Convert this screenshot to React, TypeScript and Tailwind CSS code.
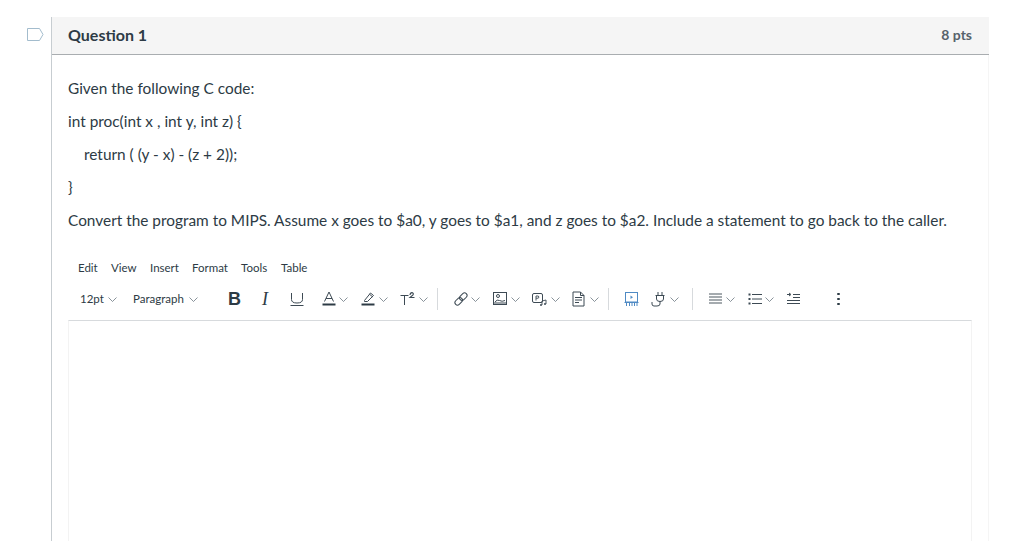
import { ReactNode } from 'react'

function Caret({ cls }: { cls: string }) {
  return (
    <svg width="9" height="9" viewBox="0 0 9 9" fill="none" stroke="#6b7780" strokeWidth="0.8" className={`shrink-0 ${cls}`}>
      <path d="M0.5 2.5 L4.5 6.5 L8.5 2.5" />
    </svg>
  )
}

function Icon({ children, w = 16, cls }: { children: ReactNode; w?: number; cls: string }) {
  return (
    <svg width={w} height="16" viewBox={`0 0 ${w} 16`} fill="none" stroke="#3d4a54" strokeWidth="1" className={`shrink-0 ${cls}`}>
      {children}
    </svg>
  )
}

function Divider({ cls }: { cls: string }) {
  return <div className={`h-[22px] w-px shrink-0 bg-[#d7dadd] ${cls}`} />
}

const menus = [
  { label: 'Edit', cls: 'w-[33px]' },
  { label: 'View', cls: 'w-[39px]' },
  { label: 'Insert', cls: 'w-[42px]' },
  { label: 'Format', cls: 'w-[49px]' },
  { label: 'Tools', cls: 'w-[40px]' },
  { label: 'Table', cls: 'w-[30px]' },
]

export default function App() {
  return (
    <div className="flex h-[541px] w-[1024px] overflow-hidden bg-white pt-[17px] font-['Lato','Liberation_Sans',sans-serif] text-[#2d3b45]">
      <div className="flex w-[51px] shrink-0 justify-end pr-[7px] pt-[11px]">
        <svg width="17" height="13" viewBox="0 0 17 13" fill="none" stroke="#a3bccd" strokeWidth="1">
          <path d="M0.5 0.5 H12.5 L16 6.5 L12.5 12.5 H0.5 Z" />
        </svg>
      </div>
      <div className="flex w-[938px] shrink-0 flex-col border-l border-[#c7cdd1]">
        <div className="flex h-[38px] shrink-0 items-center justify-between border-b border-[#a9adb0] bg-[#f5f5f5] pb-[2px] pl-4 pr-[17px]">
          <span className="text-[16px] font-bold leading-5">Question 1</span>
          <span className="text-[14px] font-bold leading-5 text-[#56626b]">8 pts</span>
        </div>
        <div className="flex flex-1 flex-col border-r border-[#f5f5f5] pl-4 pr-4 pt-[17px]">
          <div className="text-[15.4px] leading-[33px] text-[#2d3b45]">
            <p>Given the following C code:</p>
            <p>int proc(int x , int y, int z) {'{'}</p>
            <p className="pl-4">return ( (y - x) - (z + 2));</p>
            <p>{'}'}</p>
            <p className="whitespace-nowrap">Convert the program to MIPS. Assume x goes to $a0, y goes to $a1, and z goes to $a2. Include a statement to go back to the caller.</p>
          </div>

          <div className="mt-[20px] flex h-[22px] items-center pl-[10px] text-[11.5px]">
            {menus.map((m) => (
              <span key={m.label} className={m.cls}>{m.label}</span>
            ))}
          </div>

          <div className="mt-[2px] flex h-[36px] items-center pl-[12px] text-[11.5px]">
            <span className="w-[28px] shrink-0">12pt</span>
            <Caret cls="" />
            <span className="ml-[16px] w-[56px] shrink-0">Paragraph</span>
            <Caret cls="" />
            <span className="ml-[30px] w-[34px] shrink-0 font-['Liberation_Sans',sans-serif] text-[18px] font-bold leading-none">B</span>
            <span className="w-[28px] shrink-0 font-['Liberation_Serif',serif] text-[18px] italic leading-none">I</span>
            <Icon w={14} cls=""><path d="M1.5 2 V8.5 Q1.5 12 7 12 Q12.5 12 12.5 8.5 V2" /><path d="M0.5 14.5 H13.5" /></Icon>
            <Icon w={14} cls="ml-[18px]"><path d="M2.5 10.5 L7 1 L11.5 10.5 M4 7.5 H10" /><path d="M0.5 13.5 H13.5" strokeWidth="2" stroke="#2d3b45" /></Icon>
            <Caret cls="ml-[3px]" />
            <Icon w={14} cls="ml-[13px]"><path d="M3.5 9.5 L9.5 2 L12.5 4.5 L6.5 10.5 H3.5 Z M8.5 3.2 L11.5 5.8" /><path d="M0.5 13.5 H13.5" strokeWidth="2" stroke="#2d3b45" /></Icon>
            <Caret cls="ml-[4px]" />
            <Icon w={15} cls="ml-[12px]"><path d="M0.5 4.5 H8.5 M4.5 4.5 V14" /><path d="M10 4 Q10.2 1.6 12 1.6 Q14 2 13 4 L10 6.5 H14.5" strokeWidth="1.1" /></Icon>
            <Caret cls="ml-[4px]" />
            <Divider cls="ml-[9px]" />
            <Icon cls="ml-[15px]">
              <g transform="rotate(-45 8 8)">
                <rect x="0.5" y="5.5" width="8.5" height="5" rx="2.5" />
                <rect x="7" y="5.5" width="8.5" height="5" rx="2.5" />
              </g>
            </Icon>
            <Caret cls="ml-[2px]" />
            <Icon w={14} cls="ml-[13px]">
              <rect x="0.5" y="1.5" width="13" height="12" />
              <circle cx="5" cy="5" r="1.5" />
              <path d="M2 11 Q4 8 6.5 9.5 T12 9.5 M1 12 H13" />
            </Icon>
            <Caret cls="ml-[4px]" />
            <Icon w={15} cls="ml-[12px]">
              <rect x="0.5" y="2.5" width="10" height="9" rx="1.5" />
              <path d="M4 9.5 V5 H6.3 Q7.5 6 6.3 7.2 H4" strokeWidth="0.9" />
              <path d="M10 14 V10 L14 9 V13" strokeWidth="0.9" />
              <circle cx="9" cy="14" r="1" fill="#3d4a54" stroke="none" />
              <circle cx="13" cy="13" r="1" fill="#3d4a54" stroke="none" />
            </Icon>
            <Caret cls="ml-[4px]" />
            <Icon w={13} cls="ml-[12px]">
              <path d="M1 1 H8.5 L12 4.5 V15 H1 Z" />
              <path d="M8.5 1 V4.5 H12 M3 6.5 H10 M3 9 H10 M3 11.5 H7" />
            </Icon>
            <Caret cls="ml-[5px]" />
            <Divider cls="ml-[9px]" />
            <Icon w={15} cls="ml-[15px]">
              <rect x="1.5" y="1.5" width="12" height="9.5" stroke="#4f8ac4" />
              <path d="M6.5 4.5 L9 6.2 L6.5 8 Z" fill="#4f8ac4" stroke="none" />
              <path d="M0.5 11.5 H14.5 M2.5 11.5 V15 M5.5 11.5 V15 M8 11.5 V15 M10.5 11.5 V15 M13 11.5 V15" stroke="#4f8ac4" />
            </Icon>
            <Icon cls="ml-[11px]">
              <path d="M8 1 V4.5 M12 1 V4.5 M5.5 4.5 H14.5 M6.5 4.5 V8 Q6.5 10.5 10 10.5 Q13.5 10.5 13.5 8 V4.5 M10 10.5 V13 Q10 15 7 15 H4 Q2 15 2 13 V11" />
            </Icon>
            <Caret cls="ml-[4px]" />
            <Divider cls="ml-[13px]" />
            <Icon w={15} cls="ml-[15px]"><path d="M1 3 H14 M1 6 H14 M1 9 H14 M1 12 H14" stroke="#4c5861" strokeWidth="1.1" /></Icon>
            <Caret cls="ml-[3px]" />
            <Icon w={14} cls="ml-[13px]">
              <path d="M4 3.5 H14 M4 8 H14 M4 12.5 H14" />
              <path d="M0.5 3.5 H2.5 M0.5 8 H2.5 M0.5 12.5 H2.5" strokeWidth="2" />
            </Icon>
            <Caret cls="ml-[3px]" />
            <Icon w={15} cls="ml-[12px]">
              <path d="M7 3.5 H14 M7 6.5 H14 M1 9.5 H14 M1 12.5 H14" />
              <path d="M1 3.5 H4 M3 2 L5 3.5 L3 5" />
            </Icon>
            <div className="ml-[36px] flex h-4 w-[3px] shrink-0 flex-col justify-center gap-[2.5px]">
              <div className="h-[2.5px] w-[2.5px] rounded-full bg-[#2d3b45]" />
              <div className="h-[2.5px] w-[2.5px] rounded-full bg-[#2d3b45]" />
              <div className="h-[2.5px] w-[2.5px] rounded-full bg-[#2d3b45]" />
            </div>
          </div>

          <div className="mt-[3px] h-[300px] shrink-0 border-x border-t border-x-[#f3f3f3] border-t-[#d7dadd] bg-white" />
        </div>
      </div>
    </div>
  )
}
